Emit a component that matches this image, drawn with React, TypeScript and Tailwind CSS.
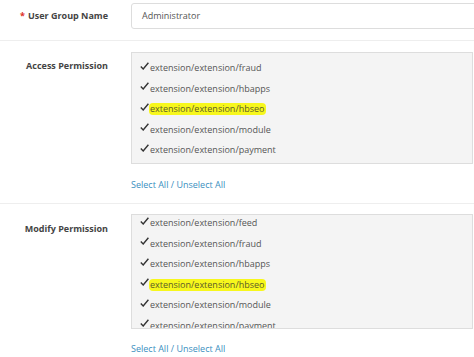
import React from "react";

const access = [
    "extension/extension/fraud",
    "extension/extension/hbapps",
    "extension/extension/hbseo",
    "extension/extension/module",
    "extension/extension/payment",
];

const modify = [
    "extension/extension/feed",
    "extension/extension/fraud",
    "extension/extension/hbapps",
    "extension/extension/hbseo",
    "extension/extension/module",
    "extension/extension/payment",
    "extension/extension/shipping",
];

const Check = () => (
    <svg width="9" height="8" viewBox="0 0 9 8" className="mr-[1px] -mt-[5px] shrink-0">
        <path d="M0.8 4.6 L3.2 7 L8.4 0.8" fill="none" stroke="#333" strokeWidth="1.4" />
    </svg>
);

const Item = ({ name }: { name: string }) => {
    const marked = name.endsWith("hbseo");
    return (
        <div className="flex items-center h-[20.5px] pl-[8px]">
            <Check />
            <span
                className={
                    marked
                        ? "bg-[#f7f71c] rounded-[4px] -ml-[1px] pl-[1px] pr-[2px] leading-[12px] text-[#5a5a2a]"
                        : "leading-[12px]"
                }
            >
                {name}
            </span>
        </div>
    );
};

const Links = () => (
    <p className="leading-[14px] text-[#3a8fc0]">Select All / Unselect All</p>
);

export default function App() {
    return (
        <div
            className="w-[474px] h-[357px] overflow-hidden bg-white text-[9px] text-[#555]"
            style={{ fontFamily: '"Open Sans", "Noto Sans", sans-serif' }}
        >
            {/* group name */}
            <div className="flex pt-[3px] pb-[11px]">
                <div className="w-[131px] shrink-0 pr-[23px] flex justify-end items-center font-bold text-[#444]">
                    <span className="text-[#e0302a] mr-[3px]">*</span>User Group Name
                </div>
                <div className="flex-1 h-[26px] border border-[#ddd] rounded-[3px] pl-[10px] flex items-center text-[#555] -mr-[4px]">
                    Administrator
                </div>
            </div>

            {/* access */}
            <div className="flex border-t border-[#eee] pt-[11px] pb-[11px]">
                <div className="w-[131px] shrink-0 pr-[23px] pt-[7px] text-right font-bold text-[#444]">
                    Access Permission
                </div>
                <div className="flex-1 flex flex-col gap-[14px]">
                    <div className="h-[112px] border border-[#ddd] bg-[#f4f4f4] pt-[5px] overflow-hidden mr-[1px]">
                        {access.map((a) => (
                            <Item key={a} name={a} />
                        ))}
                    </div>
                    <Links />
                </div>
            </div>

            {/* modify */}
            <div className="flex border-t border-[#eee] pt-[10px]">
                <div className="w-[131px] shrink-0 pr-[23px] pt-[8px] text-right font-bold text-[#444]">
                    Modify Permission
                </div>
                <div className="flex-1 flex flex-col gap-[13px]">
                    <div className="h-[115px] border border-[#ddd] bg-[#f4f4f4] overflow-hidden mr-[1px]">
                        <div className="-mt-[2px]">
                            {modify.map((m) => (
                                <Item key={m} name={m} />
                            ))}
                        </div>
                    </div>
                    <Links />
                </div>
            </div>
        </div>
    );
}
